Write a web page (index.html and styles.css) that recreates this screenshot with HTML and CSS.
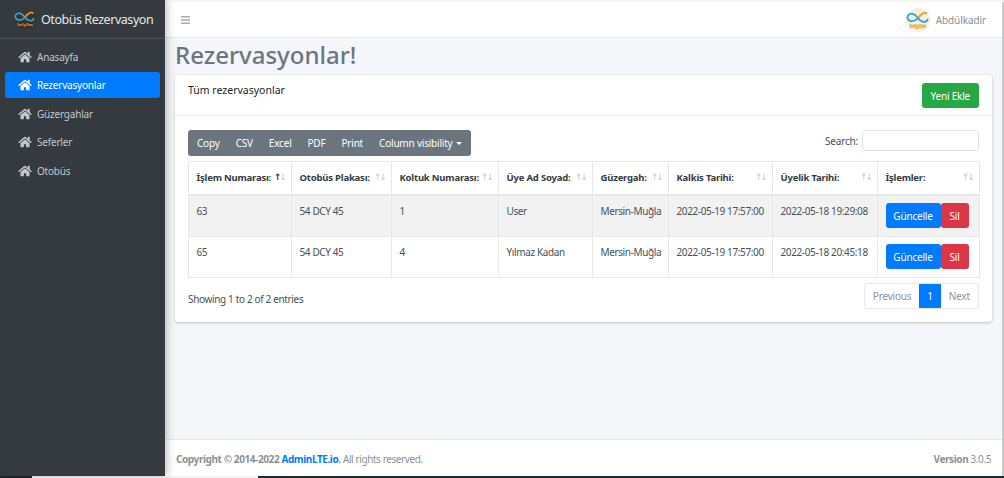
FILE: index.html
```html
<!DOCTYPE html>
<html lang="tr">
<head>
    <meta charset="UTF-8">
    <meta name="viewport" content="width=device-width, initial-scale=1.0">
    <title>Rezervasyonlar</title>
    <link rel="stylesheet" href="styles.css">
</head>
<body>

<svg class="icon-defs" width="0" height="0">
    <symbol id="home" viewBox="0 0 576 512">
        <path d="M280.37 148.26L96 300.11V464a16 16 0 0 0 16 16l112.06-.29a16 16 0 0 0 15.92-16V368a16 16 0 0 1 16-16h64a16 16 0 0 1 16 16v95.64a16 16 0 0 0 16 16.05L464 480a16 16 0 0 0 16-16V300L295.67 148.26a12.19 12.19 0 0 0-15.3 0zM571.6 251.47L488 182.56V44.05a12 12 0 0 0-12-12h-56a12 12 0 0 0-12 12v72.61L318.47 43a48 48 0 0 0-61 0L4.34 251.47a12 12 0 0 0-1.6 16.9l25.5 31A12 12 0 0 0 45.15 301l235.22-193.74a12.19 12.19 0 0 1 15.3 0L530.9 301a12 12 0 0 0 16.9-1.6l25.5-31a12 12 0 0 0-1.7-16.93z"/>
    </symbol>
    <symbol id="infinity" viewBox="0 0 40 40">
        <path d="M20 17C15 9 6 7 3 13c-2 5 2 9 7 9 4 0 7-2 10-5" fill="none" stroke="#2aa6dc" stroke-width="3"/>
        <path d="M20 17c5-8 12-11 15-7" fill="none" stroke="#ef9a2c" stroke-width="3"/>
        <path d="M20 17c4 5 8 7 12 6 3-1 4-3 4-5" fill="none" stroke="#2aa6dc" stroke-width="3"/>
    </symbol>
</svg>

<div class="top-strip"></div>

<div class="app">
    <aside class="sidebar">
        <div class="brand">
            <svg class="brand-logo" viewBox="0 0 40 40">
                <circle class="logo-bg" cx="20" cy="20" r="20"/>
                <path class="logo-low" d="M6 27h28a16 16 0 0 1-28 0z"/>
                <use href="#infinity" width="40" height="40"/>
                <text x="20" y="33" class="logo-text">InfyOm</text>
            </svg>
            <span>Otobüs Rezervasyon</span>
        </div>
        <nav class="side-nav">
            <a class="nav-link"><svg class="nav-icon"><use href="#home"/></svg>Anasayfa</a>
            <a class="nav-link active"><svg class="nav-icon"><use href="#home"/></svg>Rezervasyonlar</a>
            <a class="nav-link"><svg class="nav-icon"><use href="#home"/></svg>Güzergahlar</a>
            <a class="nav-link"><svg class="nav-icon"><use href="#home"/></svg>Seferler</a>
            <a class="nav-link"><svg class="nav-icon"><use href="#home"/></svg>Otobüs</a>
        </nav>
    </aside>

    <div class="main">
        <header class="navbar">
            <svg class="bars" viewBox="0 0 10 8"><path d="M0 .5h10M0 4h10M0 7.500h10"/></svg>
            <div class="user">
                <svg class="user-logo" viewBox="0 0 40 40">
                    <circle class="logo-bg" cx="20" cy="20" r="20"/>
                    <path class="logo-low" d="M6 27h28a16 16 0 0 1-28 0z"/>
                    <use href="#infinity" width="40" height="40"/>
                    <text x="20" y="33" class="logo-text">InfyOm</text>
                </svg>
                <span>Abdülkadir</span>
            </div>
        </header>

        <div class="content">
            <h1>Rezervasyonlar!</h1>

            <div class="card">
                <div class="card-header">
                    <span>Tüm rezervasyonlar</span>
                    <button class="btn btn-green">Yeni Ekle</button>
                </div>
                <div class="card-body">
                    <div class="table-tools">
                        <div class="export-buttons">
                            <span>Copy</span>
                            <span>CSV</span>
                            <span>Excel</span>
                            <span>PDF</span>
                            <span>Print</span>
                            <span class="dropdown">Column visibility</span>
                        </div>
                        <label class="search">Search: <input type="text"></label>
                    </div>

                    <table class="data-table">
                        <thead>
                            <tr>
                                <th class="sorted">İşlem Numarası:<span class="sort"><b>↑</b>↓</span></th>
                                <th>Otobüs Plakası:<span class="sort">↑↓</span></th>
                                <th>Koltuk Numarası:<span class="sort">↑↓</span></th>
                                <th>Üye Ad Soyad:<span class="sort">↑↓</span></th>
                                <th>Güzergah:<span class="sort">↑↓</span></th>
                                <th>Kalkis Tarihi:<span class="sort">↑↓</span></th>
                                <th>Üyelik Tarihi:<span class="sort">↑↓</span></th>
                                <th>İşlemler:<span class="sort">↑↓</span></th>
                            </tr>
                        </thead>
                        <tbody>
                            <tr class="odd">
                                <td>63</td>
                                <td>54 DCY 45</td>
                                <td>1</td>
                                <td>User</td>
                                <td>Mersin-Muğla</td>
                                <td>2022-05-19 17:57:00</td>
                                <td>2022-05-18 19:29:08</td>
                                <td class="actions"><button class="btn btn-blue">Güncelle</button><button class="btn btn-red">Sil</button></td>
                            </tr>
                            <tr>
                                <td>65</td>
                                <td>54 DCY 45</td>
                                <td>4</td>
                                <td>Yılmaz Kadan</td>
                                <td>Mersin-Muğla</td>
                                <td>2022-05-19 17:57:00</td>
                                <td>2022-05-18 20:45:18</td>
                                <td class="actions"><button class="btn btn-blue">Güncelle</button><button class="btn btn-red">Sil</button></td>
                            </tr>
                        </tbody>
                    </table>

                    <div class="table-bottom">
                        <span class="table-info">Showing 1 to 2 of 2 entries</span>
                        <div class="pagination">
                            <span>Previous</span>
                            <span class="current">1</span>
                            <span>Next</span>
                        </div>
                    </div>
                </div>
            </div>
        </div>

        <footer class="footer">
            <div><strong>Copyright © 2014-2022 <a>AdminLTE.io</a>.</strong> All rights reserved.</div>
            <div><strong>Version</strong> 3.0.5</div>
        </footer>
    </div>
</div>

<div class="bottom-strip">
    <div class="strip-a"></div>
    <div class="strip-b"></div>
    <div class="strip-c"></div>
</div>

</body>
</html>
```

FILE: styles.css
```css
/* Genel */
html, body {
    height: 100%;
}

body {
    margin: 0;
    display: flex;
    flex-direction: column;
    overflow: hidden;
    font-family: "Noto Sans", Arial, sans-serif;
    font-size: 10px;
    color: #212529;
    background-color: #f4f6f9;
}

.icon-defs {
    position: absolute;
}

.top-strip {
    height: 2px;
    margin-left: 165px;
    background-color: #f6f6f6;
}

.app {
    flex: 1;
    display: flex;
    min-height: 0;
}

/* Sidebar */
.sidebar {
    width: 165px;
    background-color: #343a40;
    margin-top: -2px;
    box-shadow: 2px 0 8px rgba(0, 0, 0, 0.25);
    z-index: 2;
}

.brand {
    height: 38px;
    display: flex;
    align-items: center;
    gap: 5px;
    padding-left: 14px;
    border-bottom: 1px solid #4b545c;
    color: #e6e6e6;
    font-size: 12.500px;
    letter-spacing: -0.45px;
}

.brand-logo {
    width: 22px;
    height: 22px;
}

.brand .logo-bg {
    fill: #3a3530;
}

.brand .logo-low {
    fill: #2c2a28;
}

.logo-text {
    font-size: 7.500px;
    font-weight: 700;
    fill: #e8a02c;
    text-anchor: middle;
    letter-spacing: 0;
}

.side-nav {
    display: flex;
    flex-direction: column;
    padding: 4px 5px;
}

.nav-link {
    height: 26.500px;
    box-sizing: border-box;
    margin-bottom: 2px;
    padding: 1px 0 0 13px;
    display: flex;
    align-items: center;
    gap: 5px;
    border-radius: 3px;
    color: #c2c7d0;
    font-size: 10px;
    letter-spacing: -0.2px;
}

.nav-link.active {
    background-color: #007bff;
    color: #fff;
}

.nav-icon {
    width: 14px;
    height: 12px;
    fill: currentColor;
}

/* Navbar */
.main {
    flex: 1;
    display: flex;
    flex-direction: column;
    min-width: 0;
    border-right: 2px solid #c9cacc;
}

.navbar {
    height: 36px;
    box-sizing: border-box;
    display: flex;
    align-items: center;
    justify-content: space-between;
    padding: 0 16px;
    background-color: #fff;
    border-bottom: 1px solid #e6e8ec;
    color: #8a8f95;
    font-size: 10px;
    letter-spacing: -0.1px;
}

.bars {
    width: 9px;
    height: 8px;
    stroke: #6c7278;
    stroke-width: 1;
}

.user {
    display: flex;
    align-items: center;
    gap: 6px;
}

.user-logo {
    width: 24px;
    height: 24px;
}

.user .logo-bg {
    fill: #f5efe2;
}

.user .logo-low {
    fill: #f3dca8;
}

/* Contenuto */
.content {
    flex: 1;
    padding: 0 10px;
}

h1 {
    margin: 0;
    height: 37px;
    line-height: 33px;
    font-size: 24px;
    font-weight: 500;
    color: #6c757d;
}

.card {
    background-color: #fff;
    border-radius: 3px;
    box-shadow: 0 0 1px rgba(0, 0, 0, 0.13), 0 1px 3px rgba(0, 0, 0, 0.2);
}

.card-header {
    height: 41px;
    box-sizing: border-box;
    display: flex;
    justify-content: space-between;
    padding: 8px 13px;
    border-bottom: 1px solid #e9ecef;
    font-size: 10.500px;
}

.card-body {
    padding: 14px 13px 13px;
}

.btn {
    border: none;
    border-radius: 3px;
    color: #fff;
    font-family: inherit;
    font-size: 10px;
    letter-spacing: -0.2px;
    height: 25px;
    padding: 0 9px;
}

.btn-green {
    background-color: #28a745;
}

.btn-blue {
    background-color: #007bff;
}

.btn-red {
    background-color: #dc3545;
}

/* Strumenti tabella */
.table-tools {
    display: flex;
    justify-content: space-between;
    align-items: flex-start;
    margin-bottom: 5px;
}

.export-buttons {
    display: flex;
    gap: 16px;
    height: 26px;
    align-items: center;
    padding: 0 9px;
    background-color: #6c757d;
    border-radius: 3px;
    color: #fff;
    font-size: 10px;
    letter-spacing: -0.2px;
}

.dropdown::after {
    content: "";
    display: inline-block;
    margin-left: 3px;
    vertical-align: 2px;
    border-top: 3px solid #fff;
    border-left: 3px solid transparent;
    border-right: 3px solid transparent;
}

.search {
    display: flex;
    align-items: center;
    gap: 4px;
    color: #495057;
    font-size: 10px;
    letter-spacing: -0.2px;
}

.search input {
    width: 115px;
    height: 19px;
    padding: 0;
    border: 1px solid #e0e3e6;
    border-radius: 3px;
}

/* Tabella */
.data-table {
    width: 791px;
    table-layout: fixed;
    border-collapse: collapse;
    color: #495057;
    font-size: 10px;
    letter-spacing: -0.38px;
}

.data-table th,
.data-table td {
    border: 1px solid #e6e8ea;
    padding: 0 8px 0 7.500px;
    text-align: left;
    white-space: nowrap;
}

.data-table th {
    position: relative;
    height: 33px;
    box-sizing: border-box;
    border-bottom-width: 2px;
    color: #343a40;
    font-size: 9.500px;
    font-weight: 700;
    letter-spacing: -0.2px;
}

.data-table td {
    height: 41.500px;
    box-sizing: border-box;
    padding-bottom: 10px;
}

.data-table td.actions {
    padding-bottom: 0;
}

.actions .btn-blue {
    width: 55px;
    padding: 0;
}

.actions .btn-red {
    width: 28px;
    padding: 0;
}

.odd td {
    background-color: #f2f2f2;
}

.data-table th:nth-child(1) { width: 103px; }
.data-table th:nth-child(2) { width: 100px; }
.data-table th:nth-child(3) { width: 107px; }
.data-table th:nth-child(4) { width: 94px; }
.data-table th:nth-child(5) { width: 76px; }
.data-table th:nth-child(6) { width: 104px; }
.data-table th:nth-child(7) { width: 105px; }
.data-table th:nth-child(8) { width: 102px; }

.sort {
    position: absolute;
    right: 6px;
    top: 10px;
    color: #c5c9cd;
    font-family: "DejaVu Sans", sans-serif;
    font-size: 9px;
    font-weight: 400;
    letter-spacing: -2px;
}

.sort b {
    color: #343a40;
    font-weight: 700;
}

.table-bottom {
    display: flex;
    justify-content: space-between;
    align-items: flex-start;
    margin-top: 5px;
    color: #495057;
    font-size: 10px;
    letter-spacing: -0.35px;
}

.table-info {
    padding-top: 9px;
}

.pagination {
    display: flex;
    height: 26px;
    box-sizing: border-box;
    align-items: stretch;
    border: 1px solid #e6e8ea;
    border-radius: 3px;
    color: #8a9197;
    letter-spacing: -0.2px;
}

.pagination span {
    display: flex;
    align-items: center;
    padding: 0 8px;
}

.pagination .current {
    background-color: #007bff;
    color: #fff;
}

/* Footer */
.footer {
    height: 37px;
    display: flex;
    justify-content: space-between;
    align-items: center;
    padding: 1px 11px 0;
    box-sizing: border-box;
    background-color: #fff;
    border-top: 1px solid #e6e8ec;
    color: #8a9197;
    font-size: 10px;
    letter-spacing: -0.4px;
}

.footer a {
    color: #007bff;
}

/* Striscia in basso */
.bottom-strip {
    height: 2px;
    display: flex;
}

.strip-a {
    width: 32px;
    background-color: #20272b;
}

.strip-b {
    width: 226px;
    background-color: #f4f4f4;
}

.strip-c {
    flex: 1;
    background-color: #1c2a2e;
}
```
